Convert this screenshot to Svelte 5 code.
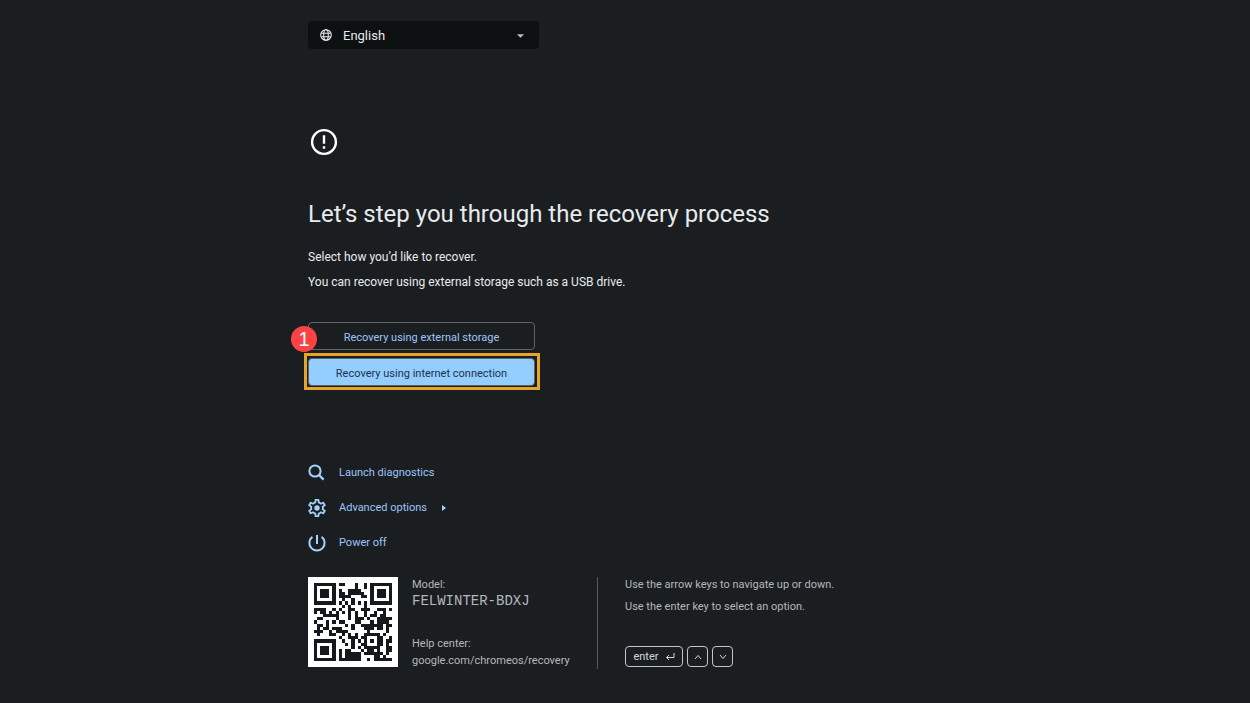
<script>
	const helpUrl = 'google.com/chromeos/recovery';
	const languages = ['English', 'Deutsch', 'Español', 'Français'];
	let language = $state('English');

	/* QR code, version 2 with level L error correction (34 data + 10 check codewords) */
	const SIZE = 25;
	const DATA_WORDS = 34;
	const CHECK_WORDS = 10;
	const FORMAT = '111100010011101';

	function multiply(a, b) {
		let result = 0;
		for (let i = 7; i >= 0; i--) {
			result = (result << 1) ^ ((result >>> 7) * 0x11d);
			result ^= ((b >>> i) & 1) * a;
		}
		return result;
	}

	function checkWords(data) {
		const generator = new Array(CHECK_WORDS).fill(0);
		generator[CHECK_WORDS - 1] = 1;
		let root = 1;
		for (let i = 0; i < CHECK_WORDS; i++) {
			for (let j = 0; j < CHECK_WORDS; j++) {
				generator[j] = multiply(generator[j], root);
				if (j + 1 < CHECK_WORDS) generator[j] ^= generator[j + 1];
			}
			root = multiply(root, 2);
		}
		const rest = new Array(CHECK_WORDS).fill(0);
		for (const word of data) {
			const factor = word ^ rest.shift();
			rest.push(0);
			generator.forEach((g, i) => (rest[i] ^= multiply(g, factor)));
		}
		return rest;
	}

	function encode(text) {
		let bits = '0100' + text.length.toString(2).padStart(8, '0');
		for (const c of text) bits += c.charCodeAt(0).toString(2).padStart(8, '0');
		bits += '0000';
		const words = bits.match(/.{8}/g).map((b) => parseInt(b, 2));
		for (let pad = 0xec; words.length < DATA_WORDS; pad ^= 0xec ^ 0x11) words.push(pad);
		return [...words, ...checkWords(words)];
	}

	function makeQr(text) {
		const grid = Array.from({ length: SIZE }, () => new Array(SIZE).fill(null));
		const set = (x, y, dark) => {
			if (x >= 0 && y >= 0 && x < SIZE && y < SIZE) grid[y][x] = dark;
		};

		for (let i = 0; i < SIZE; i++) {
			set(6, i, i % 2 === 0);
			set(i, 6, i % 2 === 0);
		}
		for (const [cx, cy] of [[3, 3], [SIZE - 4, 3], [3, SIZE - 4]]) {
			for (let dy = -4; dy <= 4; dy++) {
				for (let dx = -4; dx <= 4; dx++) {
					const d = Math.max(Math.abs(dx), Math.abs(dy));
					set(cx + dx, cy + dy, d !== 2 && d !== 4);
				}
			}
		}
		for (let dy = -2; dy <= 2; dy++) {
			for (let dx = -2; dx <= 2; dx++) {
				set(18 + dx, 18 + dy, Math.max(Math.abs(dx), Math.abs(dy)) !== 1);
			}
		}

		const line = [0, 1, 2, 3, 4, 5, 7, 8];
		for (let i = 0; i < 15; i++) {
			const dark = FORMAT[i] === '1';
			if (i < 8) set(line[i], 8, dark);
			else set(8, line[14 - i], dark);
			if (i < 7) set(8, SIZE - 1 - i, dark);
			else set(SIZE - 15 + i, 8, dark);
		}
		set(8, SIZE - 8, true);

		const words = encode(text);
		let n = 0;
		for (let right = SIZE - 1; right >= 1; right -= 2) {
			if (right === 6) right = 5;
			const upward = right > 6 ? (SIZE - 1 - right) % 4 === 0 : right % 4 === 1;
			for (let v = 0; v < SIZE; v++) {
				const y = upward ? SIZE - 1 - v : v;
				for (const x of [right, right - 1]) {
					if (grid[y][x] !== null) continue;
					const bit = n < words.length * 8 ? (words[n >> 3] >> (7 - (n & 7))) & 1 : 0;
					n++;
					grid[y][x] = (bit === 1) !== ((x + y) % 3 === 0);
				}
			}
		}
		return grid
			.flatMap((row, y) => row.map((dark, x) => (dark ? `M${x} ${y}h1v1h-1z` : '')))
			.join('');
	}

	const qrPath = makeQr(helpUrl);
</script>

<svelte:head>
	<title>Recovery</title>
</svelte:head>

<main>
	<div class="language">
		<svg class="globe" viewBox="0 0 24 24" aria-hidden="true">
			<g fill="none" stroke="currentColor" stroke-width="2.2">
				<circle cx="12" cy="12" r="10.6" />
				<ellipse cx="12" cy="12" rx="4.6" ry="10.6" />
				<path d="M2.4 8.4h19.2M2.4 15.6h19.2" />
			</g>
		</svg>
		<select aria-label="Language" bind:value={language}>
			{#each languages as name}
				<option value={name}>{name}</option>
			{/each}
		</select>
		<svg class="arrow" viewBox="0 0 8 4" aria-hidden="true"><path d="M0 0h8L4 4z" fill="currentColor" /></svg>
	</div>

	<svg class="alert" viewBox="0 0 32 32" aria-hidden="true">
		<circle cx="16" cy="16" r="11.9" fill="none" stroke="currentColor" stroke-width="2.4" />
		<path d="M14.8 9.2h2.4v8.6h-2.4zM14.8 20.2h2.4v2.6h-2.4z" fill="currentColor" />
	</svg>

	<h1>Let’s step you through the recovery process</h1>
	<p>Select how you’d like to recover.</p>
	<p>You can recover using external storage such as a USB drive.</p>

	<div class="choices">
		<button>Recovery using external storage</button>
		<button class="selected">Recovery using internet connection</button>
		<span class="frame"></span>
		<span class="step">1</span>
	</div>

	<nav>
		<button>
			<svg viewBox="0 0 18 18" aria-hidden="true">
				<g fill="none" stroke="currentColor" stroke-width="2">
					<circle cx="7" cy="7" r="5.6" />
					<path d="M11 11l4.6 4.6" stroke-width="2.4" />
				</g>
			</svg>
			Launch diagnostics
		</button>
		<button>
			<svg viewBox="2 2 20 20" aria-hidden="true">
				<path
					fill="currentColor"
					d="M19.43 12.98c.04-.32.07-.64.07-.98 0-.34-.03-.66-.07-.98l2.11-1.65c.19-.15.24-.42.12-.64l-2-3.46c-.09-.16-.26-.25-.44-.25-.06 0-.12.01-.17.03l-2.49 1c-.52-.4-1.08-.73-1.69-.98l-.38-2.65C14.46 2.18 14.25 2 14 2h-4c-.25 0-.46.18-.49.42l-.38 2.65c-.61.25-1.17.59-1.69.98l-2.49-1c-.06-.02-.12-.03-.18-.03-.17 0-.34.09-.43.25l-2 3.46c-.13.22-.07.49.12.64l2.11 1.65c-.04.32-.07.65-.07.98s.03.66.07.98l-2.11 1.65c-.19.15-.24.42-.12.64l2 3.46c.09.16.26.25.44.25.06 0 .12-.01.17-.03l2.49-1c.52.4 1.08.73 1.69.98l.38 2.65c.03.24.24.42.49.42h4c.25 0 .46-.18.49-.42l.38-2.65c.61-.25 1.17-.59 1.69-.98l2.49 1c.06.02.12.03.18.03.17 0 .34-.09.43-.25l2-3.46c.12-.22.07-.49-.12-.64l-2.11-1.65zm-1.98-1.71c.04.31.05.52.05.73 0 .21-.02.43-.05.73l-.14 1.13.89.7 1.08.84-.7 1.21-1.27-.51-1.04-.42-.9.68c-.43.32-.84.56-1.25.73l-1.06.43-.16 1.13-.2 1.35h-1.4l-.19-1.35-.16-1.13-1.06-.43c-.43-.18-.83-.41-1.23-.71l-.91-.7-1.06.43-1.27.51-.7-1.21 1.08-.84.89-.7-.14-1.13c-.03-.31-.05-.54-.05-.74s.02-.43.05-.73l.14-1.13-.89-.7-1.08-.84.7-1.21 1.27.51 1.04.42.9-.68c.43-.32.84-.56 1.25-.73l1.06-.43.16-1.13.2-1.35h1.39l.19 1.35.16 1.13 1.06.43c.43.18.83.41 1.23.71l.91.7 1.06-.43 1.27-.51.7 1.21-1.07.85-.89.7.14 1.13z"
				/>
				<circle cx="12" cy="12" r="3" fill="currentColor" />
			</svg>
			Advanced options
			<svg class="more" viewBox="0 0 4 6" aria-hidden="true"><path d="M0 0l4 3-4 3z" fill="currentColor" /></svg>
		</button>
		<button>
			<svg viewBox="0 0 18 18" aria-hidden="true">
				<path
					fill="none"
					stroke="currentColor"
					stroke-width="2"
					d="M9 1v9M4.4 2.9A7.6 7.6 0 1 0 13.6 2.9"
				/>
			</svg>
			Power off
		</button>
	</nav>

	<footer>
		<svg class="qr" viewBox="-1.75 -1.75 28.5 28.5" role="img" aria-label="QR code for the help center">
			<path d={qrPath} fill="currentColor" shape-rendering="crispEdges" />
		</svg>
		<div class="device">
			<div>
				<div>Model:</div>
				<div class="model">FELWINTER-BDXJ</div>
			</div>
			<div class="help">
				<div>Help center:</div>
				<div>{helpUrl}</div>
			</div>
		</div>
		<div class="hints">
			<div>Use the arrow keys to navigate up or down.</div>
			<div>Use the enter key to select an option.</div>
			<div class="keys">
				<kbd class="enter">
					enter
					<svg viewBox="0 0 10 8" aria-hidden="true"><path d="M9 0v4.5H1.5M4 2L1.5 4.5 4 7" /></svg>
				</kbd>
				<kbd><svg viewBox="0 0 10 8" aria-hidden="true"><path d="M2 6l3-3.5L8 6" /></svg></kbd>
				<kbd><svg viewBox="0 0 10 8" aria-hidden="true"><path d="M2 2l3 3.5L8 2" /></svg></kbd>
			</div>
		</div>
	</footer>
</main>

<style>
	:global(body) {
		margin: 0;
		background: #1a1e20;
	}

	main {
		max-width: 634px;
		margin: 0 auto;
		padding: 21px 0;
		color: #e8eaed;
		font-family: Roboto, sans-serif;
		font-size: 13px;
	}

	svg {
		display: block;
		flex: none;
	}

	.language {
		position: relative;
		width: 231px;
	}

	select {
		display: block;
		width: 100%;
		height: 28px;
		padding: 0 32px 0 35px;
		border: 0;
		border-radius: 4px;
		background: #0d1011;
		color: #e8eaed;
		font: inherit;
		appearance: none;
	}

	.globe {
		position: absolute;
		top: 8px;
		left: 12px;
		width: 12px;
		height: 12px;
	}

	.arrow {
		position: absolute;
		top: 13px;
		right: 15px;
		width: 7px;
		height: 4px;
		color: #bdc1c6;
	}

	.alert {
		width: 32px;
		height: 32px;
		margin-top: 77px;
		color: #fff;
	}

	h1 {
		margin: 40px 0 15px;
		font-size: 24px;
		font-weight: 400;
		line-height: 32px;
	}

	p {
		margin: 0;
		font-size: 12px;
		line-height: 25px;
	}

	button {
		font: inherit;
		cursor: pointer;
	}

	.choices {
		position: relative;
		display: grid;
		gap: 8px;
		width: 227px;
		margin-top: 27px;
	}

	.choices button {
		height: 28px;
		padding: 2px 0 0;
		border: 1px solid #5f6368;
		border-radius: 4px;
		background: none;
		color: #9fc4fb;
		font-size: 11px;
	}

	.choices .selected {
		background: #94cdff;
		color: #1c3152;
	}

	.frame {
		position: absolute;
		inset: 31px -5px -4px -4px;
		border: 3px solid #e5a52b;
		pointer-events: none;
	}

	.step {
		position: absolute;
		top: 4px;
		left: -17px;
		width: 26px;
		border-radius: 50%;
		background: #fb4345;
		color: #fff;
		font-family: 'Liberation Sans', sans-serif;
		font-size: 20px;
		line-height: 26px;
		text-align: center;
	}

	nav {
		display: grid;
		justify-items: start;
		margin-top: 69px;
	}

	nav button {
		display: flex;
		align-items: center;
		gap: 13px;
		height: 35px;
		padding: 0;
		border: 0;
		background: none;
		color: #9fc4fb;
		font-size: 11px;
	}

	nav svg {
		width: 18px;
		height: 18px;
		color: #a3d2ff;
	}

	nav .more {
		width: 4px;
		height: 6px;
		margin-left: 2px;
	}

	footer {
		display: flex;
		align-items: flex-start;
		margin-top: 17px;
		color: #b4b8bb;
		font-size: 11px;
		line-height: 16px;
	}

	.qr {
		width: 90px;
		height: 90px;
		background: #fff;
		color: #15191b;
	}

	.device {
		display: grid;
		gap: 26px;
		width: 185px;
		margin-left: 14px;
		border-right: 1px solid #55595c;
	}

	.model {
		font-family: 'Liberation Mono', monospace;
		font-size: 14px;
	}

	.help {
		line-height: 17px;
	}

	.hints {
		display: grid;
		gap: 6px;
		margin-left: 27px;
	}

	.keys {
		display: flex;
		gap: 4px;
		margin-top: 25px;
	}

	kbd {
		display: flex;
		align-items: center;
		justify-content: center;
		gap: 6px;
		box-sizing: border-box;
		width: 21px;
		height: 21px;
		border: 1px solid #c4c7c9;
		border-radius: 4px;
		color: #d5d8da;
		font-family: inherit;
		font-size: 11px;
	}

	.enter {
		width: 58px;
	}

	kbd svg {
		width: 10px;
		height: 8px;
		fill: none;
		stroke: currentColor;
	}
</style>
